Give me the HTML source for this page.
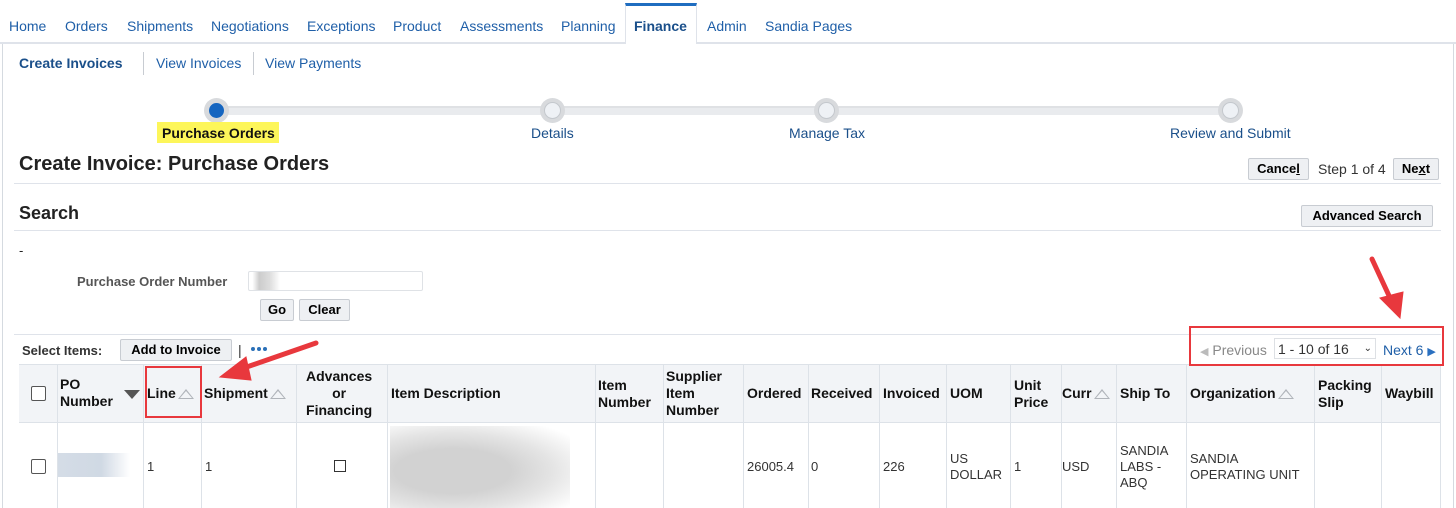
<!DOCTYPE html>
<html><head><style>
*{margin:0;padding:0;box-sizing:border-box}
body{width:1456px;height:508px;overflow:hidden;background:#fff;font-family:"Liberation Sans",Arial,sans-serif;position:relative;color:#222}
.a{position:absolute;white-space:nowrap}
.tab{font-size:14px;color:#1f5fa8;top:18px}
.btn{position:absolute;background:#eef0f3;border:1px solid #c8ccd2;border-radius:2px;font-weight:bold;font-size:13px;color:#000;text-align:center;line-height:20px}
.hd{position:absolute;font-weight:bold;font-size:14px;color:#111;line-height:17px}
.cl{position:absolute;font-size:13px;color:#333;line-height:16px}
.vl{position:absolute;width:1px;background:#dde2e8}
.tri{display:inline-block;width:0;height:0;border-left:8px solid transparent;border-right:8px solid transparent;border-bottom:10px solid #b0b4ba;vertical-align:middle;position:relative;margin-left:2px}
.tri:after{content:"";position:absolute;left:-6px;top:2px;border-left:6px solid transparent;border-right:6px solid transparent;border-bottom:7px solid #f2f4f7}
.cb{position:absolute;width:15px;height:15px;border:1.5px solid #555;border-radius:2px;background:#fff}
</style></head><body>
<div class="a" style="left:0;top:42px;width:1456px;height:2px;background:#dfe3ea"></div>
<div class="a" style="left:625px;top:3px;width:72px;height:41px;background:#fff;border:1px solid #dfe3ea;border-bottom:none;border-top:3px solid #1f6dc0"></div>
<div class="a tab" style="left:9px">Home</div>
<div class="a tab" style="left:65px">Orders</div>
<div class="a tab" style="left:127px">Shipments</div>
<div class="a tab" style="left:211px">Negotiations</div>
<div class="a tab" style="left:307px">Exceptions</div>
<div class="a tab" style="left:393px">Product</div>
<div class="a tab" style="left:460px">Assessments</div>
<div class="a tab" style="left:561px">Planning</div>
<div class="a tab" style="left:634px;font-weight:bold;color:#1a4f8a">Finance</div>
<div class="a tab" style="left:707px">Admin</div>
<div class="a tab" style="left:765px">Sandia Pages</div>
<div class="a" style="left:2px;top:44px;width:1px;height:464px;background:#d5dae0"></div>
<div class="a" style="left:1453px;top:44px;width:1px;height:464px;background:#d5dae0"></div>
<div class="a" style="left:19px;top:55px;font-size:14px;font-weight:bold;color:#1a4f8a">Create Invoices</div>
<div class="a" style="left:143px;top:52px;width:1px;height:23px;background:#c8ccd2"></div>
<div class="a" style="left:156px;top:55px;font-size:14px;color:#1f5fa8">View Invoices</div>
<div class="a" style="left:253px;top:52px;width:1px;height:23px;background:#c8ccd2"></div>
<div class="a" style="left:265px;top:55px;font-size:14px;color:#1f5fa8">View Payments</div>
<div class="a" style="left:217px;top:106px;width:1014px;height:9px;background:#e9ebee;border-top:2px solid #dfe1e4"></div>
<div class="a" style="left:204px;top:98px;width:25px;height:25px;border-radius:50%;background:#d8dadd"></div>
<div class="a" style="left:209px;top:103px;width:15px;height:15px;border-radius:50%;background:#1565c0"></div>
<div class="a" style="left:540px;top:98px;width:25px;height:25px;border-radius:50%;background:#d8dadd"></div>
<div class="a" style="left:544px;top:102px;width:17px;height:17px;border-radius:50%;background:#eef1f5;border:1px solid #c4c8cd"></div>
<div class="a" style="left:814px;top:98px;width:25px;height:25px;border-radius:50%;background:#d8dadd"></div>
<div class="a" style="left:818px;top:102px;width:17px;height:17px;border-radius:50%;background:#eef1f5;border:1px solid #c4c8cd"></div>
<div class="a" style="left:1218px;top:98px;width:25px;height:25px;border-radius:50%;background:#d8dadd"></div>
<div class="a" style="left:1222px;top:102px;width:17px;height:17px;border-radius:50%;background:#eef1f5;border:1px solid #c4c8cd"></div>
<div class="a" style="left:157px;top:122px;width:122px;height:21px;background:#fdf65a"></div>
<div class="a" style="left:162px;top:125px;font-size:14px;font-weight:bold;color:#111">Purchase Orders</div>
<div class="a" style="left:531px;top:125px;font-size:14px;color:#1a4f8a">Details</div>
<div class="a" style="left:789px;top:125px;font-size:14px;color:#1a4f8a">Manage Tax</div>
<div class="a" style="left:1170px;top:125px;font-size:14px;color:#1a4f8a">Review and Submit</div>
<div class="a" style="left:19px;top:153px;font-size:20px;font-weight:bold;color:#222">Create Invoice: Purchase Orders</div>
<div class="btn" style="left:1248px;top:158px;width:61px;height:22px">Cance<u>l</u></div>
<div class="a" style="left:1318px;top:161px;font-size:14px;color:#333">Step 1 of 4</div>
<div class="btn" style="left:1393px;top:158px;width:46px;height:22px">Ne<u>x</u>t</div>
<div class="a" style="left:14px;top:183px;width:1427px;height:1px;background:#dfe3ea"></div>
<div class="a" style="left:19px;top:203px;font-size:18px;font-weight:bold;color:#222">Search</div>
<div class="btn" style="left:1301px;top:205px;width:132px;height:22px">Advanced Search</div>
<div class="a" style="left:14px;top:230px;width:1427px;height:1px;background:#dfe3ea"></div>
<div class="a" style="left:19px;top:243px;font-size:13px">-</div>
<div class="a" style="left:77px;top:274px;font-size:13px;font-weight:bold;color:#555">Purchase Order Number</div>
<div class="a" style="left:248px;top:271px;width:175px;height:20px;border:1px solid #dfe2e6;border-radius:2px;background:linear-gradient(90deg,#fff 2%,#ccc 6%,#ddd 12%,#fff 18%)"></div>
<div class="btn" style="left:260px;top:299px;width:34px;height:22px">Go</div>
<div class="btn" style="left:299px;top:299px;width:51px;height:22px">Clear</div>
<div class="a" style="left:14px;top:334px;width:1427px;height:1px;background:#dfe3ea"></div>
<div class="a" style="left:22px;top:343px;font-size:13px;font-weight:bold;color:#333">Select Items:</div>
<div class="btn" style="left:120px;top:339px;width:112px;height:22px">Add to Invoice</div>
<div class="a" style="left:238px;top:342px;font-size:14px;color:#333">|</div>
<div class="a" style="left:251px;top:347px;width:4px;height:4px;border-radius:50%;background:#2a70b8;box-shadow:6px 0 0 #2a70b8,12px 0 0 #2a70b8"></div>
<div class="a" style="left:1200px;top:342px;font-size:14px;color:#888"><span style="color:#bbb;font-size:11px">◀</span> Previous</div>
<div class="a" style="left:1274px;top:338px;width:102px;height:21px;border:1px solid #dde0e4;font-size:14px;color:#333;padding:2px 3px">1 - 10 of 16 <span style="float:right;font-size:10px;margin-top:2px">⌄</span></div>
<div class="a" style="left:1383px;top:342px;font-size:14px;color:#1f5fa8">Next 6 <span style="color:#2a70c0;font-size:11px">▶</span></div>
<div class="a" style="left:19px;top:364px;width:1422px;height:59px;background:#f2f4f7;border-top:1px solid #dde2e8;border-bottom:1px solid #dde2e8"></div>
<div class="vl" style="left:57px;top:365px;height:143px"></div>
<div class="vl" style="left:143px;top:365px;height:143px"></div>
<div class="vl" style="left:201px;top:365px;height:143px"></div>
<div class="vl" style="left:296px;top:365px;height:143px"></div>
<div class="vl" style="left:387px;top:365px;height:143px"></div>
<div class="vl" style="left:595px;top:365px;height:143px"></div>
<div class="vl" style="left:663px;top:365px;height:143px"></div>
<div class="vl" style="left:743px;top:365px;height:143px"></div>
<div class="vl" style="left:808px;top:365px;height:143px"></div>
<div class="vl" style="left:879px;top:365px;height:143px"></div>
<div class="vl" style="left:946px;top:365px;height:143px"></div>
<div class="vl" style="left:1010px;top:365px;height:143px"></div>
<div class="vl" style="left:1061px;top:365px;height:143px"></div>
<div class="vl" style="left:1116px;top:365px;height:143px"></div>
<div class="vl" style="left:1186px;top:365px;height:143px"></div>
<div class="vl" style="left:1314px;top:365px;height:143px"></div>
<div class="vl" style="left:1381px;top:365px;height:143px"></div>
<div class="vl" style="left:1440px;top:365px;height:143px"></div>
<div class="cb" style="left:31px;top:386px"></div>
<div class="hd" style="left:60px;top:376px">PO<br>Number</div>
<div class="a" style="left:124px;top:390px;border-left:8px solid transparent;border-right:8px solid transparent;border-top:9px solid #555"></div>
<div class="hd" style="left:147px;top:385px">Line<span class="tri"></span></div>
<div class="hd" style="left:204px;top:385px">Shipment<span class="tri"></span></div>
<div class="hd" style="left:306px;top:368px;text-align:center">Advances<br>or<br>Financing</div>
<div class="hd" style="left:391px;top:385px">Item Description</div>
<div class="hd" style="left:598px;top:377px">Item<br>Number</div>
<div class="hd" style="left:666px;top:368px">Supplier<br>Item<br>Number</div>
<div class="hd" style="left:747px;top:385px">Ordered</div>
<div class="hd" style="left:811px;top:385px">Received</div>
<div class="hd" style="left:883px;top:385px">Invoiced</div>
<div class="hd" style="left:950px;top:385px">UOM</div>
<div class="hd" style="left:1014px;top:377px">Unit<br>Price</div>
<div class="hd" style="left:1062px;top:385px">Curr<span class="tri"></span></div>
<div class="hd" style="left:1120px;top:385px">Ship To</div>
<div class="hd" style="left:1190px;top:385px">Organization<span class="tri"></span></div>
<div class="hd" style="left:1318px;top:377px">Packing<br>Slip</div>
<div class="hd" style="left:1385px;top:385px">Waybill</div>
<div class="cb" style="left:31px;top:459px"></div>
<div class="a" style="left:58px;top:453px;width:72px;height:24px;background:linear-gradient(90deg,#d4dce6 0%,#d0d9e4 60%,#fff 100%)"></div>
<div class="cl" style="left:147px;top:459px">1</div>
<div class="cl" style="left:205px;top:459px">1</div>
<div class="a" style="left:334px;top:460px;width:12px;height:12px;border:1.5px solid #333"></div>
<div class="a" style="left:390px;top:426px;width:180px;height:82px;background:radial-gradient(ellipse at 35% 55%,#d2d2d2 35%,#e4e4e4 60%,#fff 90%)"></div>
<div class="cl" style="left:747px;top:459px">26005.4</div>
<div class="cl" style="left:811px;top:459px">0</div>
<div class="cl" style="left:883px;top:459px">226</div>
<div class="cl" style="left:950px;top:451px">US<br>DOLLAR</div>
<div class="cl" style="left:1014px;top:459px">1</div>
<div class="cl" style="left:1062px;top:459px">USD</div>
<div class="cl" style="left:1120px;top:443px">SANDIA<br>LABS -<br>ABQ</div>
<div class="cl" style="left:1190px;top:451px">SANDIA<br>OPERATING UNIT</div>
<div class="a" style="left:145px;top:366px;width:57px;height:52px;border:2px solid #e8383d"></div>
<div class="a" style="left:1189px;top:326px;width:255px;height:40px;border:2px solid #e8383d"></div>
<svg class="a" style="left:0;top:0" width="1456" height="508">
<g fill="#e8383d" stroke="#e8383d" stroke-linecap="round">
<line x1="316" y1="343" x2="238" y2="370" stroke-width="5"/>
<polygon points="220,377 246,357 251,380"/>
<line x1="1372" y1="259" x2="1391" y2="300" stroke-width="5"/>
<polygon points="1400,318 1380,298 1403,292"/>
</g></svg>
</body></html>
